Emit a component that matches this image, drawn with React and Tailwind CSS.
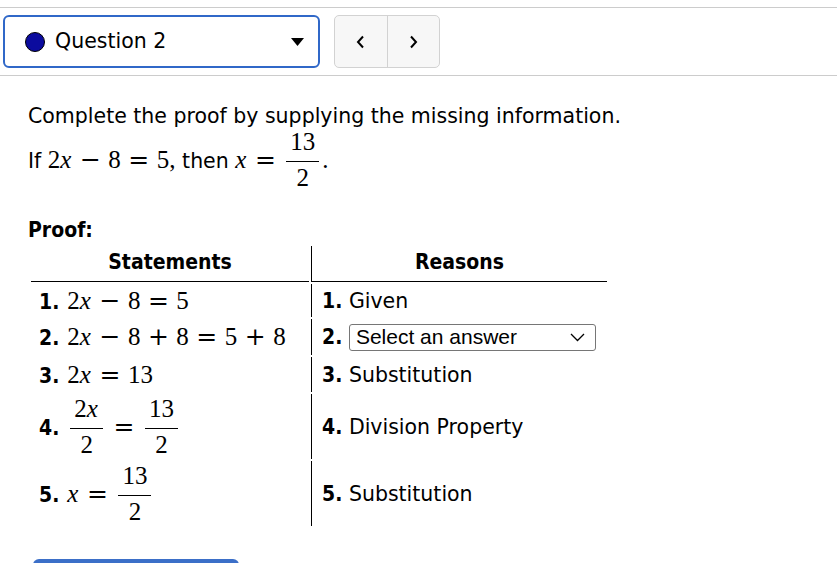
import React from "react";

const sans = "font-['DejaVu_Sans',sans-serif]";
const bold = "font-['DejaVu_Sans_Condensed','DejaVu_Sans',sans-serif] [font-stretch:condensed] font-bold";
const serif = "font-['Liberation_Serif',serif]";

// stacked fraction, baseline raised to sit on the math axis
const Frac = ({ top, bottom }) => (
  <span className={`inline-flex flex-col items-center mx-[3px] align-[18px] ${serif}`}>
    <span className="px-[4px] pb-[7px] leading-none border-b-[1.5px] border-black">{top}</span>
    <span className="px-[4px] pt-[3px] leading-none">{bottom}</span>
  </span>
);

const X = () => <i className={`${serif} mr-[1px]`}>x</i>;

// binary operator / relation, drawn with the wider DejaVu Serif glyphs
const Op = ({ children }) => (
  <span className="mx-[7.5px] leading-none font-['DejaVu_Serif',serif]">{children}</span>
);

const Math = ({ children }) => (
  <span className={`${serif} text-[25px] leading-none`}>{children}</span>
);

const rows = [
  {
    h: "h-[33px]",
    st: (
      <Math>
        2<X />
        <Op>−</Op>8<Op>=</Op>5
      </Math>
    ),
    re: "Given",
  },
  {
    h: "h-[36px]",
    st: (
      <Math>
        2<X />
        <Op>−</Op>8<Op>+</Op>8<Op>=</Op>5<Op>+</Op>8
      </Math>
    ),
    re: null,
  },
  {
    h: "h-[35px]",
    st: (
      <Math>
        2<X />
        <Op>=</Op>13
      </Math>
    ),
    re: "Substitution",
  },
  {
    h: "h-[65px]",
    st: (
      <Math>
        <Frac top={<>2<X /></>} bottom="2" />
        <Op>=</Op>
        <Frac top="13" bottom="2" />
      </Math>
    ),
    re: "Division Property",
  },
  {
    h: "h-[65px]",
    st: (
      <Math>
        <X />
        <Op>=</Op>
        <Frac top="13" bottom="2" />
      </Math>
    ),
    re: "Substitution",
  },
];

export default function App() {
  return (
    <div className={`w-[837px] h-[563px] overflow-hidden bg-white text-black ${sans}`}>
      {/* question bar */}
      <div className="mt-[7px] border-t border-b border-[#cccccc] pt-[7px] pb-[7px] px-[3px] flex items-center">
        <div className="w-[317px] h-[53px] border-2 border-[#3068c8] rounded-[6px] flex items-center pl-[20px] pr-[14px]">
          <span className="w-[20px] h-[20px] rounded-full bg-[#0b0b9e] border-[1.5px] border-black" />
          <span className="ml-[10px] text-[20.5px]">Question 2</span>
          <svg className="ml-auto" width="13" height="8" viewBox="0 0 13 8">
            <path d="M0 0h13L6.5 8z" fill="#000" />
          </svg>
        </div>
        <div className="ml-[14px] w-[106px] h-[53px] flex border border-[#d2d2d2] rounded-[5px] bg-[#f7f7f7]">
          <button className="flex-1 flex items-center justify-center border-r border-[#d2d2d2]">
            <svg width="9" height="14" viewBox="0 0 9 14">
              <path d="M7 1.5L2 7l5 5.5" fill="none" stroke="#000" strokeWidth="2" />
            </svg>
          </button>
          <button className="flex-1 flex items-center justify-center">
            <svg width="9" height="14" viewBox="0 0 9 14">
              <path d="M2 1.5L7 7l-5 5.5" fill="none" stroke="#000" strokeWidth="2" />
            </svg>
          </button>
        </div>
      </div>

      <div className="px-[28px]">
        <p className="mt-[28px] text-[20.5px] leading-[24px]">
          Complete the proof by supplying the missing information.
        </p>
        <p className="mt-[1px] text-[20.5px] leading-[54px]">
          If{" "}
          <Math>
            2<X />
            <Op>−</Op>8<Op>=</Op>5,
          </Math>{" "}
          then{" "}
          <Math>
            <X />
            <Op>=</Op>
            <Frac top="13" bottom="2" />.
          </Math>
        </p>

        <p className={`mt-[28px] text-[21px] leading-[24px] ${bold}`}>Proof:</p>

        <table className="mt-[2px] ml-[1px] border-separate border-spacing-[2px] text-[20.5px]">
          <thead>
            <tr className="h-[36px]">
              <th className={`w-[278px] border-b border-black text-center align-bottom pb-[7px] leading-[24px] text-[21px] ${bold}`}>
                Statements
              </th>
              <th className={`w-[296px] border-b border-l border-black text-center align-bottom pb-[7px] leading-[24px] text-[21px] ${bold}`}>
                Reasons
              </th>
            </tr>
          </thead>
          <tbody>
            {rows.map((r, i) => (
              <tr key={i} className={r.h}>
                <td className="pl-[8px] align-middle whitespace-nowrap leading-[24px]">
                  <b className={`mr-[8px] text-[21px] ${bold}`}>{i + 1}.</b>
                  {r.st}
                </td>
                <td className="pl-[10px] border-l border-black align-middle whitespace-nowrap leading-[24px]">
                  <b className={`text-[21px] ${bold}`}>{i + 1}.</b>{" "}
                  {r.re ? (
                    r.re
                  ) : (
                    <span className="inline-flex items-center justify-between w-[247px] h-[27px] border border-[#767676] rounded-[3px] pl-[6px] pr-[10px] align-middle font-['Liberation_Sans',sans-serif] text-[21px]">
                      Select an answer
                      <svg width="15" height="9" viewBox="0 0 15 9">
                        <path d="M1 1l6.5 6.5L14 1" fill="none" stroke="#000" strokeWidth="1.3" />
                      </svg>
                    </span>
                  )}
                </td>
              </tr>
            ))}
          </tbody>
        </table>

        <div className="mt-[31px] ml-[5px] w-[206px] h-[40px] rounded-[6px] bg-[#3b6fc8]" />
      </div>
    </div>
  );
}
